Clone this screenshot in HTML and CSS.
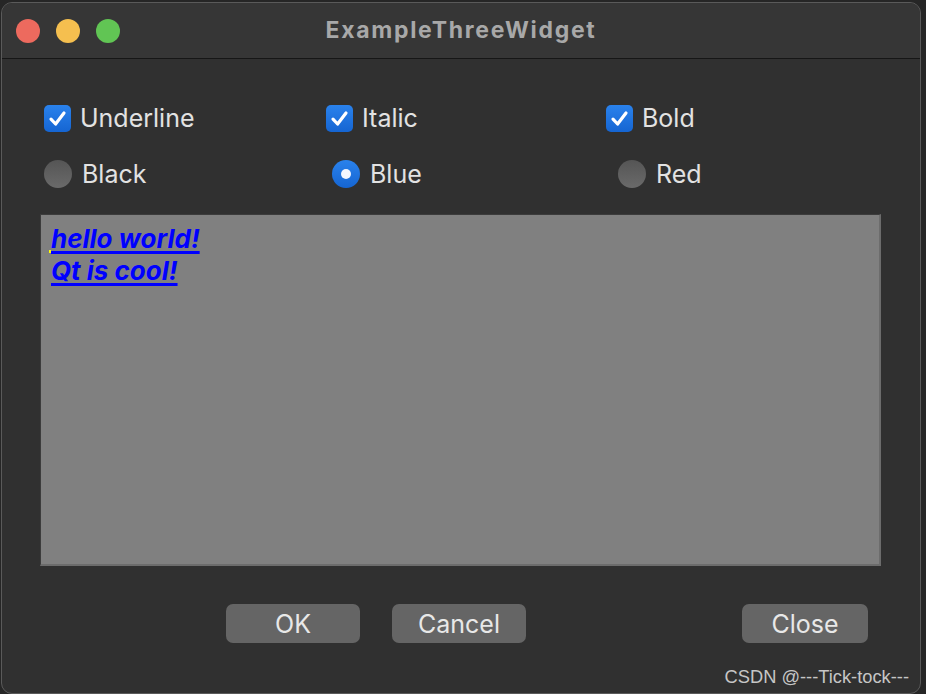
FILE: index.html
```html
<!DOCTYPE html>
<html lang="en">
  <head>
    <meta charset="UTF-8" />
    <meta name="viewport" content="width=device-width, initial-scale=1.0" />
    <title>ExampleThreeWidget</title>
    <link rel="stylesheet" href="styles.css">
  </head>
  <body>
    <div class="window">
      <div class="titlebar">
        <div class="lights">
          <span class="light red"></span>
          <span class="light yellow"></span>
          <span class="light green"></span>
        </div>
        <div class="title">ExampleThreeWidget</div>
        <div></div>
      </div>

      <div class="content">
        <!-- font style options -->
        <div class="opt-row checks">
          <label class="opt">
            <span class="box">
              <svg width="27" height="27" viewBox="0 0 27 27"><path d="M7 14.2 L11.6 19 L20 8" fill="none" stroke="#fff" stroke-width="3.2" stroke-linecap="round" stroke-linejoin="round"/></svg>
            </span>
            Underline
          </label>
          <label class="opt">
            <span class="box">
              <svg width="27" height="27" viewBox="0 0 27 27"><path d="M7 14.2 L11.6 19 L20 8" fill="none" stroke="#fff" stroke-width="3.2" stroke-linecap="round" stroke-linejoin="round"/></svg>
            </span>
            Italic
          </label>
          <label class="opt">
            <span class="box">
              <svg width="27" height="27" viewBox="0 0 27 27"><path d="M7 14.2 L11.6 19 L20 8" fill="none" stroke="#fff" stroke-width="3.2" stroke-linecap="round" stroke-linejoin="round"/></svg>
            </span>
            Bold
          </label>
        </div>

        <!-- colour options -->
        <div class="opt-row radios">
          <label class="opt"><span class="radio"></span>Black</label>
          <label class="opt"><span class="radio on"></span>Blue</label>
          <label class="opt"><span class="radio"></span>Red</label>
        </div>

        <div class="editor">
          <div class="line"><span class="caret"></span>hello world!</div>
          <div class="line">Qt is cool!</div>
        </div>

        <div class="buttons">
          <button class="btn">OK</button>
          <button class="btn">Cancel</button>
          <button class="btn close">Close</button>
        </div>
      </div>
    </div>
    <div class="watermark">CSDN @---Tick-tock---</div>
  </body>
</html>
```

FILE: styles.css
```css
body {
  margin: 0;
  padding: 0;
  width: 926px;
  height: 694px;
  overflow: hidden;
  background-color: #262626;
  font-family: Inter, "Noto Sans", sans-serif;
  position: relative;
}

.window {
  margin: 2px 0 0 1px;
  width: 918px;
  height: 690px;
  border: 1px solid #5a5a5a;
  border-radius: 11px;
  background-color: #303030;
  overflow: hidden;
}

.titlebar {
  height: 55px;
  background-color: #363636;
  border-bottom: 1px solid #161616;
  display: grid;
  grid-template-columns: 1fr auto 1fr;
  align-items: center;
}

.lights {
  display: flex;
  gap: 16px;
  padding-left: 14px;
}

.light {
  width: 24px;
  height: 24px;
  border-radius: 50%;
}

.red {
  background-color: #ed6a5e;
}
.yellow {
  background-color: #f5bf4f;
}
.green {
  background-color: #61c554;
}

.title {
  color: #a8a8a8;
  font-weight: 700;
  font-size: 23px;
  letter-spacing: 1.7px;
  margin-top: -1px;
}

.content {
  padding: 45px 39px 0 42px;
}

.opt-row {
  display: flex;
  align-items: center;
  height: 28px;
  color: #e2e2e2;
  font-size: 25px;
}

.opt {
  display: flex;
  align-items: center;
}

.checks .opt {
  gap: 9px;
}
.checks .opt:nth-child(1) {
  width: 282px;
}
.checks .opt:nth-child(2) {
  width: 280px;
}

.box {
  width: 27px;
  height: 27px;
  border-radius: 5px;
  background: linear-gradient(#2a82ec, #1565d2);
  display: flex;
}

.radios {
  margin-top: 28px;
}
.radios .opt {
  gap: 10px;
}
.radios .opt:nth-child(1) {
  width: 288px;
}
.radios .opt:nth-child(2) {
  width: 286px;
}

.radio {
  width: 28px;
  height: 28px;
  border-radius: 50%;
  background: linear-gradient(#555555, #6a6a6a);
  display: flex;
  align-items: center;
  justify-content: center;
}

.radio.on {
  background: linear-gradient(#2a82ec, #1565d2);
}

.radio.on::after {
  content: "";
  width: 10px;
  height: 10px;
  border-radius: 50%;
  background-color: #f2f6ff;
}

.editor {
  margin: 26px 0 0 -4px;
  height: 352px;
  background-color: #808080;
  border-top: 1px solid #3c3c3c;
  border-left: 1px solid #3c3c3c;
  border-right: 2px solid #6c6c6c;
  border-bottom: 2px solid #6c6c6c;
  padding: 8px 0 0 10px;
  box-sizing: border-box;
}

.line {
  font-family: Inter, "Liberation Sans", sans-serif;
  font-weight: 700;
  font-style: italic;
  font-size: 26px;
  line-height: 32px;
  color: #0000ff;
  text-decoration: underline;
  text-decoration-thickness: 3px;
  text-underline-offset: 3px;
  position: relative;
}

.caret {
  position: absolute;
  left: -2px;
  top: 27px;
  width: 2px;
  height: 3px;
  background-color: #ffff00;
}

.buttons {
  display: flex;
  margin-top: 38px;
  padding-left: 182px;
  padding-right: 13px;
  gap: 32px;
}

.btn {
  height: 39px;
  width: 134px;
  border: none;
  border-radius: 7px;
  background-color: #656565;
  color: #e8e8e8;
  font-family: Inter, "Noto Sans", sans-serif;
  font-size: 25px;
  padding: 0;
}

.btn.close {
  width: 126px;
  margin-left: auto;
}

.watermark {
  position: absolute;
  right: 17px;
  bottom: 6px;
  color: #c6c6c6;
  font-family: "Liberation Sans", Arial, sans-serif;
  font-size: 18.3px;
}
```
